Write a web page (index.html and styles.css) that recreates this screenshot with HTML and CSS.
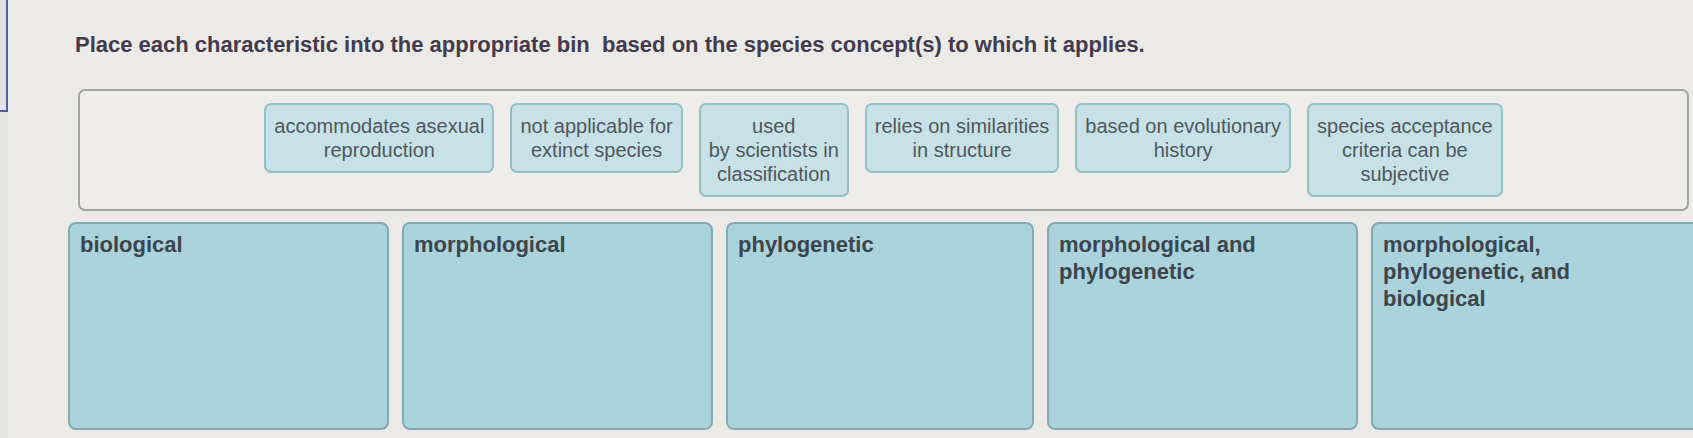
FILE: index.html
```html
<!DOCTYPE html>
<html>
<head>
<meta charset="utf-8">
<link rel="stylesheet" href="styles.css">
</head>
<body>
<div class="page">
  <div class="side"><div class="side-box"></div></div>
  <div class="main">
    <h1 class="title">Place each characteristic into the appropriate bin&nbsp; based on the species concept(s) to which it applies.</h1>
    <div class="source">
      <div class="chip">accommodates asexual<br>reproduction</div>
      <div class="chip">not applicable for<br>extinct species</div>
      <div class="chip">used<br>by scientists in<br>classification</div>
      <div class="chip">relies on similarities<br>in structure</div>
      <div class="chip">based on evolutionary<br>history</div>
      <div class="chip">species acceptance<br>criteria can be<br>subjective</div>
    </div>
    <div class="bins">
      <div class="bin">biological</div>
      <div class="bin">morphological</div>
      <div class="bin">phylogenetic</div>
      <div class="bin">morphological and<br>phylogenetic</div>
      <div class="bin">morphological,<br>phylogenetic, and<br>biological</div>
    </div>
  </div>
</div>
</body>
</html>
```

FILE: styles.css
```css
html, body {
  margin: 0;
  padding: 0;
}
body {
  width: 1693px;
  height: 438px;
  overflow: hidden;
  background: #ebeae6;
  font-family: "Liberation Sans", Arial, sans-serif;
}
.page {
  display: flex;
  height: 438px;
}
.side {
  width: 8px;
  flex: none;
  background: #e4e4e2;
}
.side-box {
  height: 110px;
  border-right: 2px solid #4e5f9e;
  border-bottom: 2px solid #4e5f9e;
  background: #e2e2e4;
}
.main {
  flex: 1;
  min-width: 0;
  padding-top: 32px;
}
.title {
  margin: 0 0 0 67px;
  font-size: 22px;
  line-height: 26px;
  font-weight: bold;
  color: #433a4e;
  white-space: nowrap;
}
.source {
  margin: 31px 0 0 70px;
  width: 1611px;
  height: 122px;
  box-sizing: border-box;
  border: 2px solid #a3a3a3;
  border-radius: 7px;
  background: #eeede9;
  padding-top: 12px;
  display: flex;
  justify-content: center;
  align-items: flex-start;
  gap: 16px;
}
.chip {
  background: #c7e2e6;
  border: 2px solid #93bfc9;
  border-radius: 7px;
  padding: 9px 8px;
  font-size: 20px;
  line-height: 24px;
  color: #50565d;
  text-align: center;
  white-space: nowrap;
}
.bins {
  margin: 11px 0 0 60px;
  display: grid;
  grid-template-columns: 321px 311px 308px 311px 340px;
  gap: 13px;
}
.bin {
  height: 208px;
  box-sizing: border-box;
  background: #aad3dc;
  border: 2px solid #82aab6;
  border-radius: 8px;
  padding: 7px 10px;
  font-size: 22px;
  line-height: 27px;
  font-weight: bold;
  color: #3c454c;
}
```
